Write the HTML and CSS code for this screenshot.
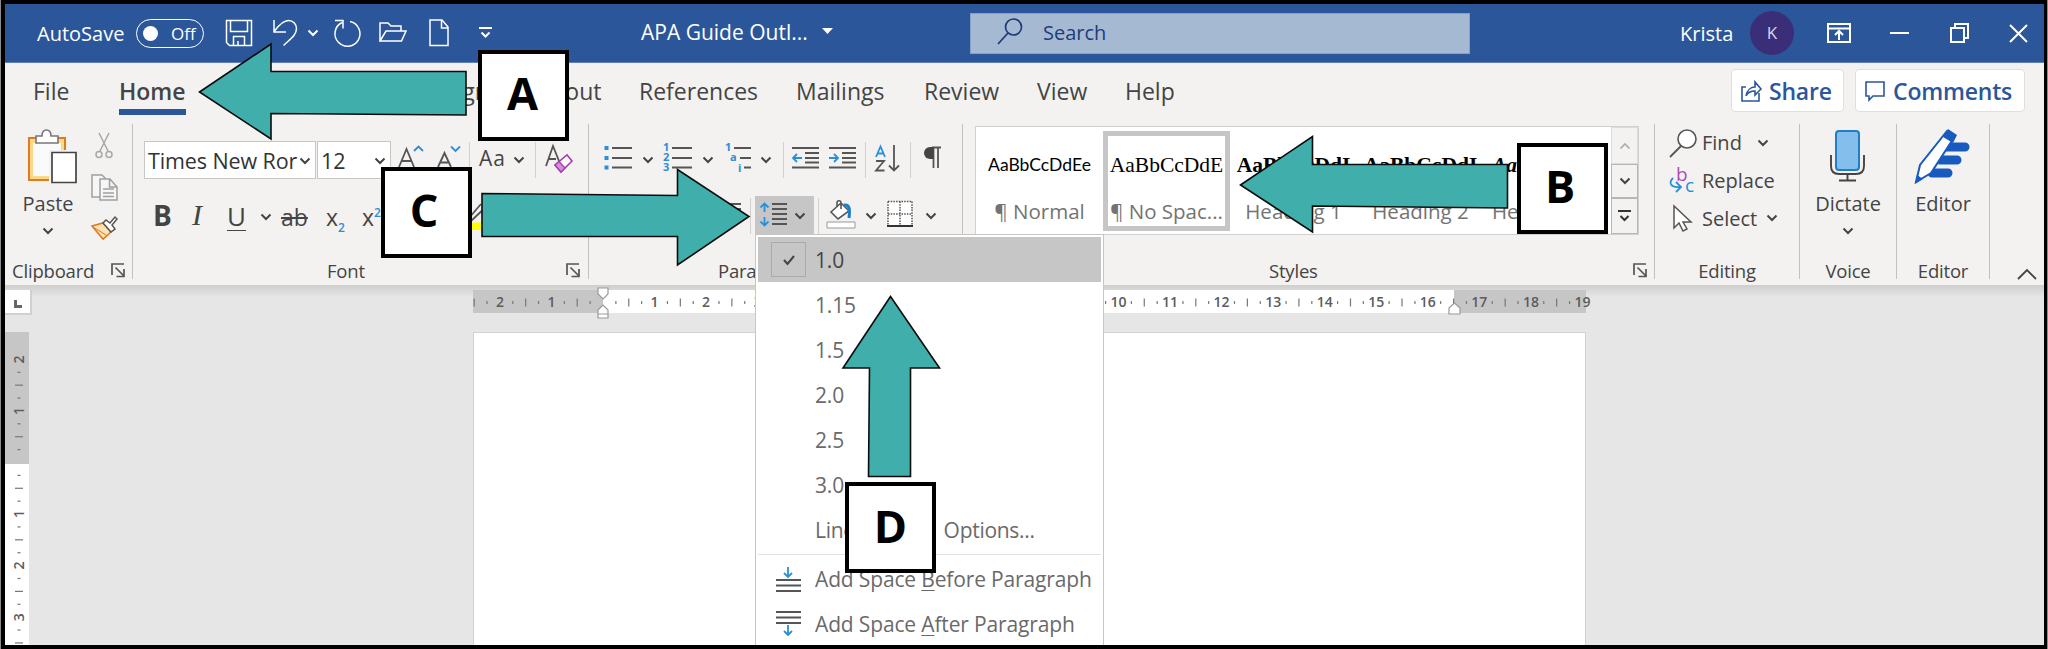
FILE: index.html
```html
<!DOCTYPE html>
<html lang="en">
<head>
    <meta charset="utf-8">
    <title>APA Guide Outline - Word</title>
    <link rel="stylesheet" href="styles.css">
</head>
<body>
    <!-- Shared icons -->
    <svg class="defs" width="0" height="0">
        <symbol id="chevron" viewBox="0 0 12 8"><path d="M1.5 1.5L6 6l4.5-4.5" fill="none" stroke="currentColor" stroke-width="2"/></symbol>
        <symbol id="launcher" viewBox="0 0 15 15"><path d="M1 12V1h12M4.500 4.500l8 8M13 6v7.500H5.500" fill="none" stroke="#555" stroke-width="1.700"/></symbol>
    </svg>

    <div class="frame">
        <!-- Title bar -->
        <div class="title-bar">
            <span class="autosave">AutoSave</span>
            <span class="toggle"><i class="knob"></i>Off</span>
            <svg class="line" width="28" height="28"><path d="M1.500 1.500h25v25h-22l-3-3zM5.500 1.500v11h17v-11M8.500 26.500v-9h11v9M13 26v-4"/></svg>
            <svg class="line" width="26" height="28"><path d="M1 1v12h12M1.500 12C6 6 10 1.500 15.500 1.500c5 0 8 4 8 8 0 7-7 11-13 17"/></svg>
            <svg class="chev" width="12" height="8"><use href="#chevron"/></svg>
            <svg class="line" width="28" height="28"><path d="M17 2.500a12.500 12.500 0 1 1-8 1M2 1.500h8v8"/></svg>
            <svg class="line" width="30" height="28"><path d="M1 22V4h8l3 3h10v5M1 22l6-10h20l-4.500 10z"/></svg>
            <svg class="line" width="22" height="28"><path d="M1 1h12l6 7v18.500H1zM12.500 1v8H19"/></svg>
            <svg class="line bold" width="14" height="12"><path d="M0 1h13M2.500 5.500l4 4 4-4"/></svg>
            <span class="doc-title">APA Guide Outl...</span>
            <svg width="12" height="10"><path d="M0 0h11L5.500 6z" fill="#fff"/></svg>
            <div class="search">
                <svg width="28" height="28"><circle cx="17.500" cy="9" r="8" fill="none" stroke="#1e3c78" stroke-width="1.700"/><path d="M12 15L2 26" stroke="#1e3c78" stroke-width="1.800"/></svg>
                <span>Search</span>
            </div>
            <span class="user">Krista</span>
            <span class="avatar">K</span>
            <svg class="line bold" width="25" height="20"><path d="M1 1h22v18H1zM1 5.500h22M12 17V8.500M8 12l4-4 4 4"/></svg>
            <svg class="line bold" width="20" height="20"><path d="M0 10h19"/></svg>
            <svg class="line bold" width="20" height="20"><path d="M1 5h13v14H1zM5 5V1h13v14h-4"/></svg>
            <svg class="line bold" width="20" height="20"><path d="M1 2l17 17M18 2L1 19"/></svg>
        </div>

        <!-- Ribbon tabs -->
        <div class="tabs">
            <span class="tab">File</span>
            <span class="tab active">Home</span>
            <span class="tab">Insert</span>
            <span class="tab">Draw</span>
            <span class="tab">Design</span>
            <span class="tab">Layout</span>
            <span class="tab">References</span>
            <span class="tab">Mailings</span>
            <span class="tab">Review</span>
            <span class="tab">View</span>
            <span class="tab">Help</span>
            <span class="tab-btn share">
                <svg width="22" height="24"><path d="M5 8H1v14h17v-8M5 17c1-6 5-9 9-9V3l6 7-6 6v-4c-4 0-7 1-9 5z"/></svg>
                <b>Share</b>
            </span>
            <span class="tab-btn comments">
                <svg width="22" height="24"><path d="M1 3h18v14H8l-4 4v-4H1z"/></svg>
                <b>Comments</b>
            </span>
        </div>

        <!-- Ribbon -->
        <div class="ribbon">
            <div class="group clipboard">
                <div class="clip-body">
                    <div class="big paste">
                        <svg width="52" height="56">
                            <path d="M2 9h36v42H2z" fill="#f9d88c" stroke="#e07a1f" stroke-width="2"/>
                            <path d="M6 14h28v33H6z" fill="#fafafa"/>
                            <path d="M9 14V7h6c0-4 2-6 4.500-6S24 3 24 7h7v7z" fill="#fff" stroke="#777" stroke-width="1.600"/>
                            <path d="M22 21h28v34H22z" fill="#f3f2f1"/>
                            <path d="M25 23.500h24v30H25z" fill="#fff" stroke="#444" stroke-width="1.700"/>
                        </svg>
                        <span>Paste</span>
                        <svg class="chev" width="12" height="8"><use href="#chevron"/></svg>
                    </div>
                    <div class="clip-tools">
                        <svg width="28" height="28" fill="none" stroke="#a8a8a8" stroke-width="1.500"><path d="M8 1l9 18M18 1L9 19"/><circle cx="8" cy="22.500" r="3"/><circle cx="18" cy="22.500" r="3"/></svg>
                        <svg width="28" height="28" fill="#f6f6f6" stroke="#a0a0a0" stroke-width="1.500"><path d="M1 1h10l3 3v19H1z"/><path d="M9 5h10l7 8v13H9zM18.500 5v8H26M12 15h11M12 19h11M12 22.500h11"/></svg>
                        <svg width="28" height="24"><path d="M1 10l11-3 8 9-8 7z" fill="#fbe3b5" stroke="#e07a1f" stroke-width="1.600"/><path d="M2 11l13 8" stroke="#e07a1f"/><path d="M12 7l3-3 4 3 5-6 2 2-5 6 3 4-4 3z" fill="#fff" stroke="#555" stroke-width="1.500"/></svg>
                    </div>
                </div>
                <div class="group-label"><span>Clipboard</span><svg width="15" height="15"><use href="#launcher"/></svg></div>
            </div>

            <div class="group font">
                <div class="row row1">
                    <span class="combo font-name">Times New Ror <svg class="chev" width="12" height="8"><use href="#chevron"/></svg></span>
                    <span class="combo font-size">12 <svg class="chev" width="12" height="8"><use href="#chevron"/></svg></span>
                    <svg width="28" height="39"><path d="M1 27L8.500 9 16 27M3.500 21h10" class="ink"/><path d="M16 11l4.500-4.500L25 11" class="blue"/></svg>
                    <svg width="28" height="39"><path d="M1 27L7.500 13 14 27M3 22.500h9" class="ink"/><path d="M14 6.500l4.500 4.500L23 6.500" class="blue"/></svg>
                    <i class="sep"></i>
                    <span class="aa">Aa</span>
                    <svg class="chev" width="12" height="8"><use href="#chevron"/></svg>
                    <i class="sep"></i>
                    <svg width="30" height="39"><path d="M1 26L8 6l6 15M4 19h7" class="ink"/><path d="M10 25L22 15l5 6-11 11z" fill="#fff" stroke="#a83db0" stroke-width="1.600"/><path d="M10 25l4-3.500 6 6.500-4 4z" fill="#d58fd9" stroke="#a83db0" stroke-width="1.300"/></svg>
                </div>
                <div class="row row2">
                    <b class="bold-btn">B</b>
                    <i class="italic-btn">I</i>
                    <span class="underline-btn">U</span>
                    <svg class="chev" width="12" height="8"><use href="#chevron"/></svg>
                    <span class="strike-btn">ab</span>
                    <span class="script">x<sub>2</sub></span>
                    <span class="script">x<sup>2</sup></span>
                    <svg width="24" height="39"><path d="M0 21L12 7M2 24L18 9M0 24h3" class="ink"/><path d="M0 25.500h20V33H0z" fill="#ff0"/></svg>
                </div>
                <div class="group-label"><span>Font</span><svg width="15" height="15"><use href="#launcher"/></svg></div>
            </div>

            <div class="group paragraph">
                <div class="row row1">
                    <svg width="30" height="39"><path d="M8 8h20M8 18h20M8 27.500h20" class="ink"/><path d="M.5 6h4v4h-4zM.5 16h4v4h-4zM.5 25.500h4v4h-4z" fill="#2b8fd6"/></svg>
                    <svg class="chev" width="12" height="8"><use href="#chevron"/></svg>
                    <svg width="30" height="39"><path d="M8 8h20M8 18h20M8 27.500h20" class="ink"/><g class="tiny"><text x="-1" y="11">1</text><text x="-1" y="21">2</text><text x="-1" y="31">3</text></g></svg>
                    <svg class="chev" width="12" height="8"><use href="#chevron"/></svg>
                    <svg width="30" height="39"><path d="M9 8h17M15 18h11M19 27.500h7" class="ink"/><g class="tiny"><text x="0" y="11">1</text><text x="5" y="21">a</text><text x="13" y="32">i</text></g></svg>
                    <svg class="chev" width="12" height="8"><use href="#chevron"/></svg>
                    <i class="sep"></i>
                    <svg width="28" height="39"><path d="M0 8h27M13 13h14M13 18h14M13 22.500h14M0 27.500h27" class="ink"/><path d="M10 18H1.500M5 14l-4 4 4 4" class="blue"/></svg>
                    <svg width="28" height="39"><path d="M0 8h27M13 13h14M13 18h14M13 22.500h14M0 27.500h27" class="ink"/><path d="M0 18h8.500M5 14l4 4-4 4" class="blue"/></svg>
                    <i class="sep"></i>
                    <svg width="26" height="39"><path d="M1 17L5.500 6.500 10 17M2.500 13.500h6" class="blue"/><path d="M1 21h8L1 30.500h8.500M19 5v25M14 25.500l5 5 5-5" class="ink"/></svg>
                    <i class="sep"></i>
                    <svg width="20" height="39"><path d="M8 7.500h9M9.500 7.500V28M14 7.500V28" class="ink"/><path d="M9.500 7H6a6 6 0 0 0 0 12h3.500z" fill="#444"/></svg>
                </div>
                <div class="row row2">
                    <svg width="20" height="39"><path d="M0 8h16M0 13h16M0 18h16M0 23h16" class="ink"/></svg>
                    <i class="sep"></i>
                    <span class="spacing-btn">
                        <svg width="30" height="39"><path d="M12 8h15M12 13h15M12 18h15M12 23h15M12 28h15" class="ink"/><path d="M4.500 16V8M.5 11.500l4-4 4 4M4.500 21v8M.5 25.500l4 4 4-4" class="blue"/></svg>
                        <svg class="chev" width="12" height="8"><use href="#chevron"/></svg>
                    </span>
                    <i class="sep"></i>
                    <svg width="32" height="39"><path d="M5 16l10-9 8 8-11 8zM11 11V7c0-3 4-3 4 0v6" fill="#fff" stroke="#555" stroke-width="1.600"/><path d="M18 9c6-1 6 5 5 13" fill="none" stroke="#1f7fc4" stroke-width="3"/><path d="M1 26h28v6H1z" fill="#fff" stroke="#999"/></svg>
                    <svg class="chev" width="12" height="8"><use href="#chevron"/></svg>
                    <svg width="28" height="39"><path d="M1 5.500h24v24H1z" fill="#fff"/><path d="M1 5.500h24M1 5.500v24M25 5.500v24M13 5.500v24M1 18h24" fill="none" stroke="#555" stroke-width="1.500" stroke-dasharray="1.500 1.200"/><path d="M0 30h26" stroke="#333" stroke-width="2"/></svg>
                    <svg class="chev" width="12" height="8"><use href="#chevron"/></svg>
                </div>
                <div class="group-label"><span>Paragraph</span></div>
            </div>

            <div class="group styles">
                <div class="gallery">
                    <div class="style-cell normal"><span class="sample">AaBbCcDdEe</span><span class="name">¶ Normal</span></div>
                    <div class="style-cell selected"><span class="sample">AaBbCcDdE</span><span class="name">¶ No Spac...</span></div>
                    <div class="style-cell heading"><span class="sample">AaBbCcDdI</span><span class="name">Heading 1</span></div>
                    <div class="style-cell heading"><span class="sample">AaBbCcDdI</span><span class="name">Heading 2</span></div>
                    <div class="style-cell heading italic"><span class="sample">AaBbCc</span><span class="name">Heading 3</span></div>
                    <div class="scroll">
                        <span class="off"><svg width="12" height="8"><path d="M1.500 6.500L6 2l4.500 4.500" fill="none" stroke="#aaa" stroke-width="1.600"/></svg></span>
                        <span><svg class="chev" width="12" height="8"><use href="#chevron"/></svg></span>
                        <span><svg width="14" height="13"><path d="M0 1h13M2.500 6l4 4 4-4" fill="none" stroke="#333" stroke-width="2"/></svg></span>
                    </div>
                </div>
                <div class="group-label"><span>Styles</span><svg width="15" height="15"><use href="#launcher"/></svg></div>
            </div>

            <div class="group editing">
                <div class="edit-list">
                    <svg width="28" height="28"><circle cx="18" cy="10" r="9" fill="#fff" stroke="#555" stroke-width="1.600"/><path d="M12 17L1 28" stroke="#555" stroke-width="1.800"/></svg>
                    <span>Find</span>
                    <svg class="chev" width="12" height="8"><use href="#chevron"/></svg>
                    <svg width="28" height="28"><text x="7" y="15" class="rep-b">b</text><text x="16" y="26" class="rep-c">c</text><path d="M4 12c-5 5-2 10 7 9M7 16l5 5-5 5" class="blue"/></svg>
                    <span class="wide">Replace</span>
                    <svg width="28" height="28"><path d="M5 2v22l5-5 4 8 4-2-4-7h8z" fill="#fff" stroke="#555" stroke-width="1.500"/></svg>
                    <span>Select</span>
                    <svg class="chev shift" width="12" height="8"><use href="#chevron"/></svg>
                </div>
                <div class="group-label"><span>Editing</span></div>
            </div>

            <div class="group voice">
                <div class="big">
                    <svg width="36" height="56"><rect x="6" y="2" width="23" height="39" rx="3" fill="#83beec" stroke="#1f7fc4" stroke-width="2"/><path d="M1 26v11q0 8 8 8h17q8 0 8-8V26M17.500 45v6M9 51.500h17" fill="none" stroke="#444" stroke-width="1.900"/></svg>
                    <span>Dictate</span>
                    <svg class="chev" width="12" height="8"><use href="#chevron"/></svg>
                </div>
                <div class="group-label"><span>Voice</span></div>
            </div>

            <div class="group editor">
                <div class="big">
                    <svg width="58" height="56"><path d="M31 18h20M26 31h17M18 44h16" stroke="#185abd" stroke-width="9" stroke-linecap="round"/><path d="M2 53l4-17L33 2l8 5-24 37z" fill="#fff" stroke="#185abd" stroke-width="2"/><path d="M34 0l9 6-4 8-10-6z" fill="#185abd"/><path d="M1 55l2-9 6 4z" fill="#185abd"/></svg>
                    <span>Editor</span>
                </div>
                <div class="group-label"><span>Editor</span></div>
            </div>

            <svg class="collapse" width="20" height="12"><path d="M1 11l9-9 9 9" fill="none" stroke="#444" stroke-width="1.800"/></svg>
        </div>

        <!-- Document area -->
        <div class="workspace">
            <div class="ruler-row">
                <span class="tab-stop"><i></i></span>
                <svg id="hRuler" class="ruler" width="1113" height="23"></svg>
            </div>
            <div class="doc-row">
                <svg id="vRuler" class="ruler" width="24" height="313"></svg>
                <div class="page"></div>
            </div>
        </div>
    </div>

    <!-- Line spacing menu -->
    <div class="menu">
        <div class="item hover"><i class="check"><svg width="14" height="12"><path d="M2 6l3.500 4L12 2" fill="none" stroke="#444" stroke-width="2"/></svg></i><span>1.0</span></div>
        <div class="item"><span>1.15</span></div>
        <div class="item"><span>1.5</span></div>
        <div class="item"><span>2.0</span></div>
        <div class="item"><span>2.5</span></div>
        <div class="item"><span>3.0</span></div>
        <div class="item options"><span>Line Spacing Options...</span></div>
        <div class="item divided">
            <svg width="26" height="28"><path d="M0 15h25M0 20.500h25M0 26h25" class="ink"/><path d="M12 2v10M8 8l4 4 4-4" class="blue"/></svg>
            <span>Add Space <u>B</u>efore Paragraph</span>
        </div>
        <div class="item">
            <svg width="26" height="28"><path d="M0 2h25M0 7.500h25M0 13h25" class="ink"/><path d="M12 15v10M8 21l4 4 4-4" class="blue"/></svg>
            <span>Add Space <u>A</u>fter Paragraph</span>
        </div>
    </div>

    <!-- Callouts -->
    <svg class="arrows" width="2048" height="649">
        <path d="M199.500 92L271 44v27.500h195V115l-195-1.500V139z"/>
        <path d="M1240.500 185l72-48.500v28h195V208l-195-2v26z"/>
        <path d="M482 193.500l195.500 2v-26l71.500 47-71.500 48.500v-28.500H482z"/>
        <path d="M890.500 296.500l49 71.500h-29v108.500H868.500l1-108.500h-26.500z"/>
    </svg>
    <div class="callout a">A</div>
    <div class="callout b">B</div>
    <div class="callout c">C</div>
    <div class="callout d">D</div>

    <script>
        const STEP = 51.55; // pixels per centimetre

        // Horizontal ruler, zero at the left margin
        let h = '<rect width="130" height="23" fill="#c6c6c6"/><rect x="130" width="852" height="23" fill="#fff"/><rect x="981" width="132" height="23" fill="#c6c6c6"/>';
        for (let q = -10; q <= 76; q++) {
            const x = 130 + q * STEP / 4;
            if (q === 0) continue;
            if (q % 4 === 0) {
                h += `<text x="${x}" y="17">${Math.abs(q / 4)}</text>`;
            } else {
                const len = q % 2 === 0 ? 4 : 1.5;
                h += `<path d="M${x} ${12.5 - len}V${12.5 + len}"/>`;
            }
        }
        h += '<path class="marker" d="M125 -2h10v6l-5 5-5-5zM125 28v-8l5-5 5 5v8zM125 24h10M976 24v-6l5.500-5 5.500 5v6z"/>';
        document.getElementById('hRuler').innerHTML = h;

        // Vertical ruler, zero at the top margin
        let v = '<rect width="24" height="132" fill="#c6c6c6"/><rect y="132" width="24" height="181" fill="#fff"/>';
        for (let q = -9; q <= 14; q++) {
            const y = 130.5 + q * STEP / 4;
            if (q === 0) continue;
            if (q % 4 === 0) {
                v += `<text transform="translate(19 ${y}) rotate(-90)">${Math.abs(q / 4)}</text>`;
            } else if (q > -8) {
                const len = q % 2 === 0 ? 4 : 1.5;
                v += `<path d="M${14 - len} ${y}H${14 + len}"/>`;
            }
        }
        document.getElementById('vRuler').innerHTML = v;
    </script>
</body>
</html>
```
FILE: styles.css
```css
* {
    box-sizing: border-box;
}
body {
    margin: 0;
    background: #8c8c8c;
    font-family: "Open Sans", "Noto Sans", sans-serif;
    color: #444;
    overflow: hidden;
}
svg {
    display: block;
    overflow: visible;
    flex: none;
}
.defs {
    position: absolute;
}
.frame {
    width: 2046px;
    height: 649px;
    margin-left: 1px;
    border: 4px solid #000;
    border-right-width: 3px;
    overflow: hidden;
    background: #e6e6e6;
}
.chev {
    color: #444;
}
.ink {
    fill: none;
    stroke: #555;
    stroke-width: 1.8;
}
.blue {
    fill: none;
    stroke: #2b8fd6;
    stroke-width: 1.8;
}

/* Title bar */
.title-bar {
    display: grid;
    grid-template-columns: 99px 89px 48px 34px 26px 46px 50px 50px 162px 181px 148px 710px 70px 77px 63px 60px 59px 30px;
    align-items: center;
    height: 59px;
    padding-left: 32px;
    background: #2b579a;
    border-bottom: 1px solid #5f80b4;
    color: #fff;
    font-size: 20px;
    white-space: nowrap;
}
.title-bar .chev {
    color: #fff;
}
.line {
    fill: none;
    stroke: #fff;
    stroke-width: 1.5;
}
.line.bold {
    stroke-width: 2;
}
.toggle {
    display: flex;
    align-items: center;
    gap: 13px;
    width: 68px;
    height: 29px;
    padding-left: 6px;
    border: 1.5px solid #fff;
    border-radius: 15px;
    font-size: 17px;
}
.knob {
    width: 15px;
    height: 15px;
    border-radius: 50%;
    background: #fff;
}
.doc-title {
    font-size: 21px;
    padding-bottom: 3px;
}
.search {
    display: flex;
    align-items: center;
    gap: 19px;
    width: 500px;
    height: 41px;
    padding: 0 0 2px 25px;
    background: #a6b9d3;
    border: 1px solid #86a0c8;
    color: #1e3c78;
}
.avatar {
    width: 44px;
    height: 44px;
    border-radius: 50%;
    background: #3b2e78;
    color: #d8d4ea;
    font-size: 17px;
    line-height: 44px;
    text-align: center;
}

/* Tabs */
.tabs {
    display: grid;
    grid-template-columns: 86px 107px 98px 92px 113px 110px 157px 128px 113px 88px 606px 124px 170px;
    height: 56px;
    padding-left: 28px;
    background: #f3f2f1;
}
.tab {
    justify-self: start;
    height: 52px;
    line-height: 57px;
    font-size: 23px;
    white-space: nowrap;
}
.tab.active {
    font-weight: 600;
    border-bottom: 6px solid #2b579a;
}
.tab-btn {
    display: flex;
    align-items: center;
    gap: 6px;
    height: 43px;
    margin-top: 6px;
    padding-left: 9px;
    background: #fff;
    border: 1px solid #e1dfdd;
    border-radius: 4px;
    color: #2b579a;
    font-size: 23px;
}
.tab-btn b {
    font-weight: 600;
    letter-spacing: -0.2px;
}
.tab-btn svg {
    fill: none;
    stroke: #2b579a;
    stroke-width: 1.6;
}
.share {
    width: 113px;
}

/* Ribbon */
.ribbon {
    display: flex;
    height: 166px;
    padding-top: 5px;
    background: #f3f2f1;
}
.group {
    flex: none;
    display: flex;
    flex-direction: column;
    height: 155px;
    border-right: 1.5px solid #c2c0be;
}
.group-label {
    display: grid;
    align-items: center;
    height: 20px;
    margin-top: auto;
    font-size: 18.5px;
    line-height: 22px;
    white-space: nowrap;
}
.group-label span {
    letter-spacing: -0.2px;
    padding-top: 1px;
}
.clipboard { width: 128px; }
.font { width: 456px; }
.paragraph { width: 374px; }
.styles { width: 692px; }
.editing { width: 145px; }
.voice { width: 97px; }
.editor { width: 93px; }
.clipboard .group-label { grid-template-columns: 99px 15px; padding-left: 7px; }
.font .group-label { grid-template-columns: 239px 15px; padding-left: 194px; }
.paragraph .group-label { padding-left: 129px; }
.styles .group-label { grid-template-columns: 364px 15px; padding-left: 306px; }
.editing .group-label, .voice .group-label, .editor .group-label {
    justify-content: center;
}
.clip-body {
    display: flex;
}
.big {
    display: flex;
    flex-direction: column;
    align-items: center;
    padding-top: 5px;
    font-size: 20px;
    line-height: 37px;
}
.big .chev {
    margin-top: 5px;
}
.paste {
    width: 50px;
    margin-left: 18px;
}
.paste svg:first-child {
    margin-left: 10px;
}
.clip-tools {
    display: flex;
    flex-direction: column;
    gap: 14px;
    padding: 8px 0 0 18px;
}
.row {
    display: grid;
    align-items: center;
    height: 39px;
    white-space: nowrap;
}
.row1 {
    margin-top: 16px;
}
.row2 {
    margin-top: 17px;
}
.sep {
    width: 1px;
    height: 36px;
    background: #d2d0ce;
}
.font .row1 {
    grid-template-columns: 173px 81px 39px 32px 10px 34px 22px 10px 30px;
    padding-left: 11px;
}
.combo {
    display: flex;
    align-items: center;
    justify-content: space-between;
    height: 38px;
    padding: 2px 4px 0 3px;
    background: #fff;
    border: 1px solid #c8c6c4;
    font-size: 21.5px;
    color: #333;
}
.font-name {
    width: 172px;
    letter-spacing: -0.1px;
}
.font-size {
    width: 74px;
}
.aa {
    font-size: 21px;
    letter-spacing: 1px;
    padding-bottom: 3px;
}
.font .row2 {
    grid-template-columns: 39px 35px 33px 21px 45px 36px 107px 24px;
    padding-left: 20px;
}
.bold-btn {
    font-size: 28px;
    padding-bottom: 3px;
}
.italic-btn {
    font: italic 30px "Liberation Serif", serif;
    padding-bottom: 3px;
}
.underline-btn {
    font-size: 26px;
    line-height: 27px;
    width: 19px;
    border-bottom: 1.5px solid #444;
}
.strike-btn {
    font-size: 23px;
    text-decoration: line-through;
}
.script {
    font-size: 23px;
    line-height: 30px;
}
.script sub, .script sup {
    font-size: 12px;
    font-weight: 600;
    color: #2b8fd6;
    line-height: 0;
}
.paragraph .row1 {
    grid-template-columns: 39px 21px 39px 22px 36px 22px 9px 37px 36px 10px 35px 14px 20px;
    padding-left: 15px;
}
.paragraph .row2 {
    grid-template-columns: 25px 5px 63px 8px 40px 21px 39px 12px;
    padding-left: 136px;
}
.paragraph .chev {
    margin-left: -1px;
}
.tiny text {
    font-size: 11px;
    font-weight: 700;
    fill: #2b8fd6;
}
.spacing-btn {
    display: flex;
    align-items: center;
    gap: 5px;
    width: 59px;
    height: 39px;
    padding-left: 5px;
    background: #c6c6c6;
}

/* Styles gallery */
.gallery {
    display: flex;
    width: 664px;
    height: 109px;
    margin: 2px 0 0 12px;
    background: #fff;
    border: 1px solid #d2d0ce;
}
.style-cell {
    display: flex;
    flex-direction: column;
    align-items: center;
    flex: none;
    width: 127px;
    height: 100px;
    margin-top: 4px;
    overflow: hidden;
    white-space: nowrap;
}
.sample {
    margin-top: 20px;
    font: 21.5px/28px "Liberation Serif", serif;
    color: #000;
}
.name {
    margin-top: 18px;
    font-size: 20.5px;
    line-height: 28px;
    color: #737373;
}
.normal .sample {
    font: 17.5px/28px Lato, sans-serif;
}
.selected {
    border: 5px solid #c6c6c6;
}
.selected .sample {
    margin-top: 15px;
}
.heading .sample {
    font-weight: 700;
}
.italic .sample {
    font-style: italic;
}
.gallery .italic {
    flex: 1;
    width: auto;
    align-items: flex-start;
    padding-left: 8px;
}
.scroll {
    display: grid;
    grid-template-rows: 37px 34px 36px;
    width: 27px;
    background: #f3f2f1;
}
.scroll span {
    display: flex;
    align-items: center;
    justify-content: center;
    border: 1px solid #b8b6b4;
}
.scroll .off {
    border-color: #dddbd9;
}

/* Editing */
.edit-list {
    display: grid;
    grid-template-columns: 34px 54px 20px;
    grid-template-rows: 37px 38px 38px;
    align-items: center;
    padding: 0 0 0 14px;
    font-size: 20px;
}
.edit-list span {
    margin-left: -1px;
}
.edit-list .wide {
    grid-column: 2 / 4;
}
.edit-list .shift {
    margin-left: 9px;
}
.rep-b, .rep-c {
    font-size: 19px;
    fill: #b04ab8;
}
.rep-c {
    fill: #2b8fd6;
}
.collapse {
    margin: 144px 0 0 27px;
}

/* Document area */
.workspace {
    height: 360px;
    padding-top: 5px;
    background: linear-gradient(#cfcecd, #d6d6d6 4px, #e6e6e6 12px);
}
.ruler-row {
    display: flex;
    height: 23px;
}
.tab-stop {
    width: 27px;
    height: 25px;
    padding: 10px 0 0 9px;
    background: #fff;
    border-right: 2px solid #d0d0d0;
    border-bottom: 2px solid #d0d0d0;
}
.tab-stop i {
    display: block;
    width: 8px;
    height: 8px;
    border-left: 3px solid #666;
    border-bottom: 3px solid #666;
}
.ruler-row .ruler {
    margin-left: 441px;
}
.ruler text {
    font-size: 14px;
    font-weight: 600;
    fill: #5c5c5c;
    text-anchor: middle;
}
.ruler path {
    stroke: #777;
    stroke-width: 1.2;
}
.ruler .marker {
    fill: #fff;
    stroke: #999;
}
.doc-row {
    display: flex;
    padding-top: 19px;
}
.page {
    width: 1113px;
    height: 313px;
    margin-left: 444px;
    background: #fff;
    border: 1px solid #d2d2d2;
    border-bottom: 0;
}

/* Line spacing menu */
.menu {
    position: absolute;
    left: 755px;
    top: 234px;
    width: 349px;
    height: 411px;
    padding: 2px;
    background: #fff;
    border: 1px solid #c6c6c6;
    border-bottom: 0;
    overflow: hidden;
    font-size: 21px;
    letter-spacing: -0.15px;
    color: #6a6a6a;
    white-space: nowrap;
}
.item {
    display: grid;
    grid-template-columns: 39px auto;
    justify-content: start;
    align-items: center;
    height: 45px;
    padding-left: 18px;
}
.item span {
    grid-column: 2;
}
.item.hover {
    grid-template-columns: 44px auto;
    padding-left: 13px;
    background: #c6c6c6;
    color: #444;
}
.item.options {
    letter-spacing: -0.3px;
    word-spacing: 2.5px;
}
.item.divided {
    height: 47px;
    margin-top: 2px;
    padding-top: 2px;
    border-top: 1px solid #e1e1e1;
}
.item u {
    text-decoration-thickness: 1px;
    text-underline-offset: 3px;
}
.check {
    display: flex;
    align-items: center;
    justify-content: center;
    width: 35px;
    height: 35px;
    border: 1px solid #aaa;
}

/* Callouts */
.arrows {
    position: absolute;
    left: 0;
    top: 0;
    fill: #40afab;
    stroke: #0c0c0c;
    stroke-width: 1.6;
}
.callout {
    position: absolute;
    width: 91px;
    height: 91px;
    background: #fff;
    border: 4px solid #000;
    color: #000;
    font-size: 45px;
    font-weight: 700;
    line-height: 78px;
    text-align: center;
}
.callout.a { left: 478px; top: 50px; padding-right: 2px; }
.callout.b { left: 1517px; top: 143px; padding-right: 5px; }
.callout.c { left: 381px; top: 167px; padding-right: 5px; }
.callout.d { left: 845px; top: 482px; line-height: 80px; }
```
